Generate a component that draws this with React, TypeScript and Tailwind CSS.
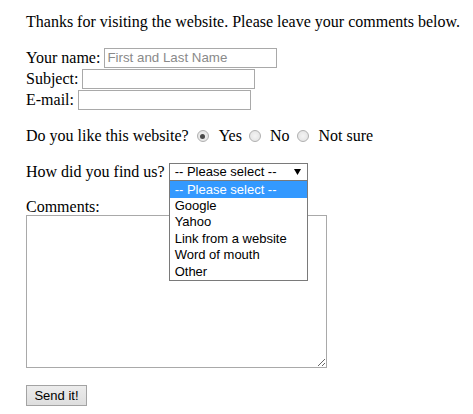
import React from "react";

function Radio({ checked }: { checked?: boolean }) {
  return (
    <span className="inline-flex items-center justify-center w-[12px] h-[12px] rounded-full border border-[#b0b0b0] bg-[radial-gradient(circle,#f4f4f4_0%,#e0e0e0_100%)] shrink-0">
      {checked ? <span className="w-[5px] h-[5px] rounded-full bg-[#4a4a4a]" /> : null}
    </span>
  );
}

export default function App() {
  const options = ["Google", "Yahoo", "Link from a website", "Word of mouth", "Other"];
  return (
    <div className="w-[473px] h-[414px] bg-white text-black font-['Liberation_Serif',serif] text-[16px] pl-[26px] pt-[13px] relative">
      <div className="h-[18px] leading-[18px]">Thanks for visiting the website. Please leave your comments below.</div>

      <div className="mt-[16px] flex flex-col">
        <div className="h-[21px] flex items-center">
          <span>Your name:</span>
          <div className="ml-[4px] w-[173px] h-[20px] border border-[#a9a9a9] bg-white flex items-center pl-[2px] font-['Liberation_Sans',Arial,sans-serif] text-[13.33px] text-[#8a8a8a]">
            First and Last Name
          </div>
        </div>
        <div className="h-[21px] flex items-center">
          <span>Subject:</span>
          <div className="ml-[4px] w-[173px] h-[20px] border border-[#a9a9a9] bg-white" />
        </div>
        <div className="h-[21px] flex items-center">
          <span>E-mail:</span>
          <div className="ml-[4px] w-[173px] h-[20px] border border-[#a9a9a9] bg-white" />
        </div>
      </div>

      <div className="mt-[17px] h-[18px] flex items-center">
        <span>Do you like this website?</span>
        <span className="ml-[8px] mr-[10px] flex"><Radio checked /></span>
        <span>Yes</span>
        <span className="ml-[7px] mr-[9px] flex"><Radio /></span>
        <span>No</span>
        <span className="ml-[8px] mr-[9px] flex"><Radio /></span>
        <span>Not sure</span>
      </div>

      <div className="mt-[17px] h-[19px] flex items-center">
        <span>How did you find us?</span>
        <div className="ml-[4px] relative">
          <div className="w-[139px] h-[18px] border border-[#7a7a7a] bg-white flex items-center justify-between pl-[5px] pr-[5px] font-['Liberation_Sans',Arial,sans-serif] text-[13px] leading-[16px]">
            <span>-- Please select --</span>
            <svg width="7" height="6" viewBox="0 0 7 6" className="mr-[1px]">
              <path d="M0 0 H7 L3.5 6 Z" fill="#000" />
            </svg>
          </div>
          <div className="absolute left-0 top-[17px] w-[139px] border border-[#7a7a7a] bg-white z-10 font-['Liberation_Sans',Arial,sans-serif] text-[13px]">
            <div className="h-[17px] leading-[17px] bg-[#3399ff] text-white pl-[5px]">-- Please select --</div>
            {options.map((o) => (
              <div key={o} className="h-[16.5px] leading-[16.5px] text-black pl-[5px]">{o}</div>
            ))}
          </div>
        </div>
      </div>

      <div className="mt-[17px] h-[17px] leading-[17px]">Comments:</div>
      <textarea className="block w-[301px] h-[153px] border border-[#a9a9a9] bg-white outline-none" />

      <button className="mt-[17px] w-[61px] h-[21px] border border-[#a3a3a3] bg-[linear-gradient(#ececec,#dedede)] font-['Liberation_Sans',Arial,sans-serif] text-[13px] leading-[19px] text-black flex items-center justify-center">
        Send it!
      </button>
    </div>
  );
}
